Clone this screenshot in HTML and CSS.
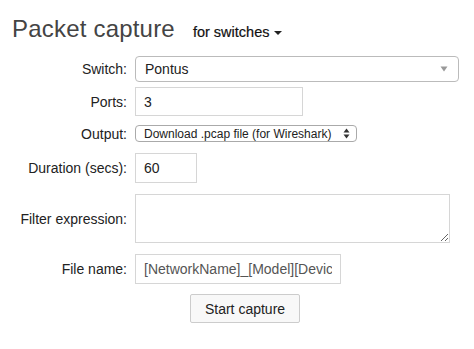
FILE: index.html
```html
<!DOCTYPE html>
<html lang="en">
<head>
<meta charset="UTF-8">
<meta name="viewport" content="width=device-width, initial-scale=1.0">
<title>Packet capture</title>
<link rel="stylesheet" href="styles.css">
</head>
<body>

<!-- Title -->
<div class="page-head">
  <h1>Packet capture</h1>
  <a class="scope" href="#">for switches <span class="caret"></span></a>
</div>

<!-- Form -->
<form class="capture-form">
  <div class="row r-switch">
    <label class="lbl" for="switch">Switch:</label>
    <div class="select-wrap">
      <select id="switch" class="big-select">
        <option>Pontus</option>
      </select>
      <svg class="select-arrow" width="8" height="6" viewBox="0 0 8 6"><path d="M0.5 0.5h7L4 5.5z" fill="#999"/></svg>
    </div>
  </div>

  <div class="row r-ports">
    <label class="lbl" for="ports">Ports:</label>
    <input id="ports" class="txt ports" type="text" value="3">
  </div>

  <div class="row r-output">
    <label class="lbl" for="output">Output:</label>
    <div class="select-wrap">
      <select id="output" class="small-select">
        <option>Download .pcap file (for Wireshark)</option>
      </select>
      <svg class="updown" width="7" height="11" viewBox="0 0 7 11"><path d="M0.5 4.5L3.5 0.5L6.5 4.5z M0.5 6.5L3.5 10.5L6.5 6.5z" fill="#333"/></svg>
    </div>
  </div>

  <div class="row r-duration">
    <label class="lbl" for="duration">Duration (secs):</label>
    <input id="duration" class="txt duration" type="text" value="60">
  </div>

  <div class="row r-filter">
    <label class="lbl" for="filter">Filter expression:</label>
    <textarea id="filter" class="filter"></textarea>
  </div>

  <div class="row r-fname">
    <label class="lbl" for="fname">File name:</label>
    <input id="fname" class="txt fname" type="text" value="[NetworkName]_[Model][DeviceName]">
  </div>

  <div class="actions"><button type="button" class="btn">Start capture</button></div>
</form>

</body>
</html>
```

FILE: styles.css
```css
* {
  margin: 0;
  padding: 0;
  box-sizing: border-box;
}

body {
  font-family: 'Liberation Sans', Arial, sans-serif;
  background: #fff;
  color: #222;
  font-size: 14px;
}

a {
  text-decoration: none;
  color: inherit;
}

/* title */
.page-head {
  display: flex;
  align-items: baseline;
  padding: 15px 0 0 12px;
  height: 56px;
}

.page-head h1 {
  font-size: 24px;
  font-weight: 400;
  color: #444;
  letter-spacing: 0.2px;
}

.scope {
  margin-left: 18px;
  font-size: 14.5px;
  color: #111;
  -webkit-text-stroke: 0.2px #111;
}

.caret {
  display: inline-block;
  width: 0;
  height: 0;
  border-left: 4px solid transparent;
  border-right: 4px solid transparent;
  border-top: 4px solid #222;
  vertical-align: middle;
  margin-left: 1px;
}

/* form rows */
.row {
  display: flex;
  align-items: center;
}

.lbl {
  width: 127px;
  margin-right: 8px;
  text-align: right;
  color: #222;
  flex-shrink: 0;
}

.r-ports { margin-top: 5px; }
.r-output { margin-top: 9px; }
.r-duration { margin-top: 11px; }
.r-filter { margin-top: 11px; }
.r-fname { margin-top: 11px; }

.select-wrap {
  position: relative;
}

.big-select {
  appearance: none;
  display: block;
  width: 324px;
  height: 26px;
  border: 1px solid #bbb;
  border-radius: 4px;
  background: #fff;
  font: inherit;
  font-size: 14px;
  color: #222;
  padding-left: 9px;
}

.select-arrow {
  position: absolute;
  left: 305px;
  top: 10px;
}

.small-select {
  appearance: none;
  display: block;
  width: 222px;
  height: 17px;
  border: 1px solid #aaa;
  border-radius: 4px;
  background: #fff;
  font: inherit;
  font-size: 12px;
  color: #222;
  padding: 0 0 0 8px;
}

.updown {
  position: absolute;
  left: 208px;
  top: 3px;
}

.txt {
  height: 30px;
  border: 1px solid #d6d6d6;
  font: inherit;
  font-size: 14px;
  color: #222;
  padding: 0 8px;
  outline: none;
}

.ports {
  width: 168px;
  height: 29px;
}

.duration {
  width: 62px;
}

.fname {
  width: 206px;
  color: #555;
}

.filter {
  display: block;
  width: 315px;
  height: 49px;
  border: 1px solid #d6d6d6;
  font: inherit;
  resize: both;
}

.actions {
  padding-left: 190px;
  margin-top: 10px;
}

.btn {
  width: 110px;
  height: 29px;
  border: 1px solid #ccc;
  border-radius: 2px;
  background: #f8f8f8;
  font: inherit;
  font-size: 14px;
  color: #222;
}
```
